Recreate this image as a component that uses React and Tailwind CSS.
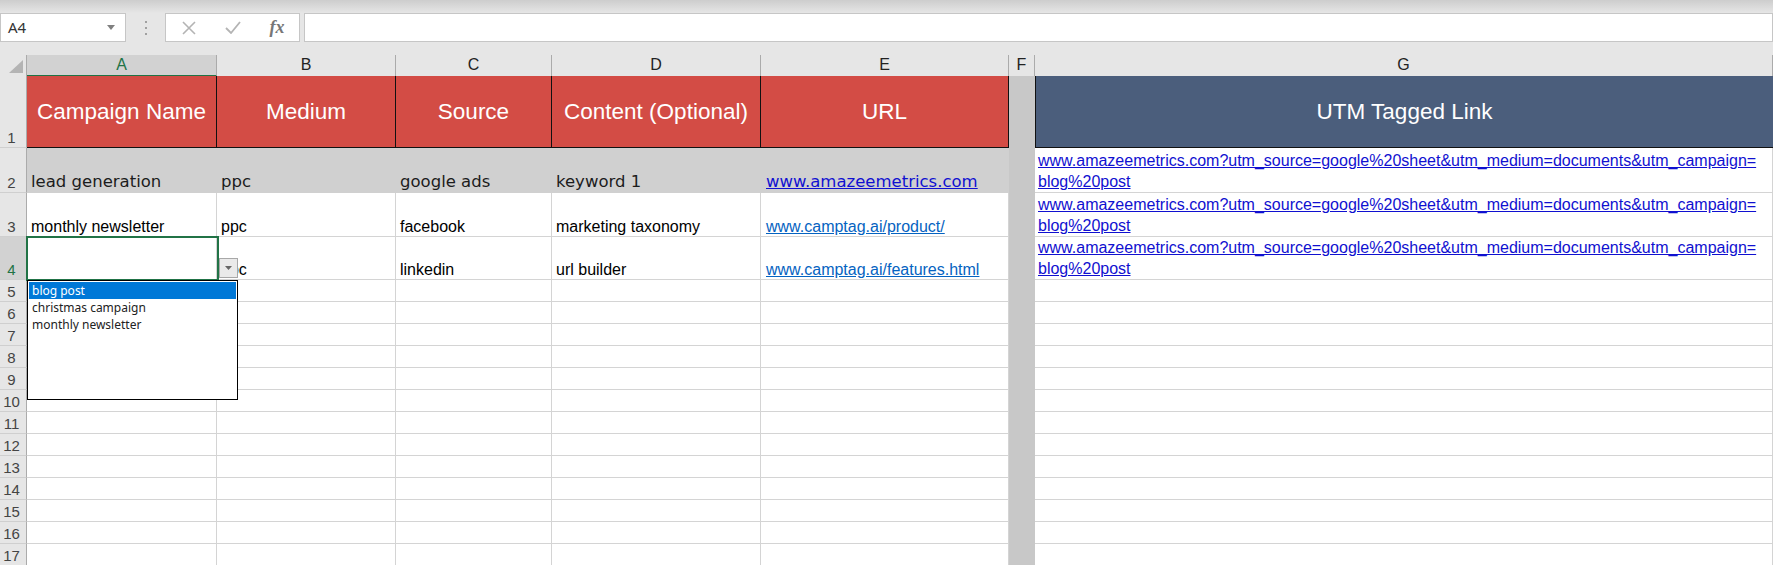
import React from 'react';

// Excel-like sheet: UTM builder with an open data validation dropdown on A4
const GRID = 'grid grid-cols-[27px_190px_179px_156px_209px_248px_26px_738px]';
const ARIAL = "font-['Liberation_Sans',Arial,sans-serif]";
const VERDANA = "font-['DejaVu_Sans',Verdana,sans-serif]";
const SEGOE = "font-['Noto_Sans','Open_Sans',sans-serif]";

const UTM_LINE = 'www.amazeemetrics.com?utm_source=google%20sheet&utm_medium=documents&utm_campaign=';

const HEADERS = ['Campaign Name', 'Medium', 'Source', 'Content (Optional)', 'URL'];

const DATA = [
  { n: 3, a: 'monthly newsletter', b: 'ppc', c: 'facebook', d: 'marketing taxonomy', e: 'www.camptag.ai/product/', h: 'h-[44px]' },
  { n: 4, a: '', b: 'ppc', c: 'linkedin', d: 'url builder', e: 'www.camptag.ai/features.html', h: 'h-[43px]', selected: true },
];

const EMPTY_ROWS = [5, 6, 7, 8, 9, 10, 11, 12, 13, 14, 15, 16, 17];

function RowHeader({ n, selected }) {
  return (
    <div
      className={`flex items-end justify-center pr-[3px] border-r border-b border-r-[#ababab] border-b-[#cfcfcf] text-[15px] leading-[19px] ${ARIAL} ${
        selected ? 'bg-[#d2d2d2] text-[#217346]' : 'bg-[#e6e6e6] text-[#444]'
      }`}
    >
      {n}
    </div>
  );
}

function UtmCell() {
  return (
    <div className={`flex flex-col justify-end pl-[3px] bg-white border-b border-r border-[#d4d4d4] text-[16px] leading-[21px] text-[#1010d0] underline whitespace-nowrap overflow-hidden ${ARIAL}`}>
      <span>{UTM_LINE}</span>
      <span>blog%20post</span>
    </div>
  );
}

function FormulaBar() {
  return (
    <div className="h-[29px] flex items-stretch bg-[#e6e6e6]">
      <div className="w-[126px] flex items-center justify-between bg-white border border-[#c6c6c6] pl-[7px] pr-[10px]">
        <span className={`text-[15px] text-[#333] ${SEGOE}`}>A4</span>
        <svg width="8" height="5" viewBox="0 0 8 5">
          <path d="M0 0h8L4 5z" fill="#808080" />
        </svg>
      </div>
      <div className="w-[39px] flex flex-col items-center justify-center gap-[4px]">
        <span className="w-[2px] h-[2px] bg-[#a0a0a0]" />
        <span className="w-[2px] h-[2px] bg-[#a0a0a0]" />
        <span className="w-[2px] h-[2px] bg-[#a0a0a0]" />
      </div>
      <div className="w-[135px] flex items-center bg-white border border-[#c6c6c6]">
        <div className="w-[45px] flex justify-center">
          <svg width="14" height="14" viewBox="0 0 14 14">
            <path d="M1 1l12 12M13 1L1 13" stroke="#b4b4b4" strokeWidth="1.6" />
          </svg>
        </div>
        <div className="w-[44px] flex justify-center">
          <svg width="16" height="13" viewBox="0 0 16 13">
            <path d="M1 7l5 5L15 1" stroke="#b4b4b4" strokeWidth="1.8" fill="none" />
          </svg>
        </div>
        <div className="w-[44px] flex justify-center italic font-bold text-[18px] text-[#777] font-['Liberation_Serif',serif]">
          fx
        </div>
      </div>
      <div className="w-[4px]" />
      <div className="flex-1 bg-white border border-[#c6c6c6]" />
    </div>
  );
}

function ColumnHeaders() {
  const letters = ['B', 'C', 'D', 'E', 'F', 'G'];
  return (
    <div className={`${GRID} h-[21px] bg-[#e6e6e6] text-[16px] leading-[20px] text-[#222] ${ARIAL}`}>
      <div className="flex items-end justify-end pr-[3px] pb-[3px] border-r border-b border-[#ababab]">
        <svg width="14" height="13" viewBox="0 0 14 13">
          <path d="M14 0V13H0z" fill="#b4b4b4" />
        </svg>
      </div>
      <div className="flex justify-center bg-[#d2d2d2] text-[#217346] border-b-2 border-[#217346] border-r border-r-[#ababab]">
        A
      </div>
      {letters.map((l) => (
        <div key={l} className="flex justify-center border-r border-b border-[#ababab]">
          {l}
        </div>
      ))}
    </div>
  );
}

export default function App() {
  return (
    <div className="w-[1773px] h-[565px] overflow-hidden bg-[#e6e6e6]">
      <div className="h-[13px] bg-gradient-to-b from-[#cdcdcd] to-[#e6e6e6]" />
      <FormulaBar />
      <div className="h-[13px]" />

      <div className="relative">
        <ColumnHeaders />

        {/* Row 1: headers */}
        <div className={`${GRID} h-[72px] text-white text-[22.5px] ${ARIAL}`}>
          <RowHeader n={1} />
          {HEADERS.map((h) => (
            <div key={h} className="flex items-center justify-center bg-[#d34c45] border-r border-b border-[#111]">
              {h}
            </div>
          ))}
          <div className="bg-[#c8c8c8]" />
          <div className="flex items-center justify-center bg-[#4b5e7c] border-l border-b border-[#111]">
            UTM Tagged Link
          </div>
        </div>

        {/* Row 2 */}
        <div className={`${GRID} h-[45px]`}>
          <RowHeader n={2} />
          {['lead generation', 'ppc', 'google ads', 'keyword 1'].map((t) => (
            <div key={t} className={`flex items-end pl-[4px] pb-[1px] bg-[#d0d0d0] text-[16.5px] leading-[20px] text-[#1c1c1c] whitespace-nowrap ${VERDANA}`}>
              {t}
            </div>
          ))}
          <div className={`flex items-end pl-[5px] pb-[1px] bg-[#d0d0d0] text-[16.5px] leading-[20px] text-[#1010d0] underline whitespace-nowrap ${VERDANA}`}>
            www.amazeemetrics.com
          </div>
          <div className="bg-[#c8c8c8]" />
          <UtmCell />
        </div>

        {/* Rows 3-4 */}
        {DATA.map((r) => (
          <div key={r.n} className={`${GRID} ${r.h} text-[16px] leading-[18px] text-black ${ARIAL}`}>
            <RowHeader n={r.n} selected={r.selected} />
            {[r.a, r.b, r.c, r.d].map((t, i) => (
              <div key={i} className="flex items-end pl-[4px] pb-[0px] bg-white border-r border-b border-[#d4d4d4] whitespace-nowrap overflow-hidden">
                {t}
              </div>
            ))}
            <div className="flex items-end pl-[5px] pb-[0px] bg-white border-r border-b border-[#d4d4d4] whitespace-nowrap text-[#0563c1] underline">
              {r.e}
            </div>
            <div className="bg-[#c8c8c8]" />
            <UtmCell />
          </div>
        ))}

        {/* Empty rows */}
        {EMPTY_ROWS.map((n) => (
          <div key={n} className={`${GRID} h-[22px]`}>
            <RowHeader n={n} />
            <div className="bg-white border-r border-b border-[#d4d4d4]" />
            <div className="bg-white border-r border-b border-[#d4d4d4]" />
            <div className="bg-white border-r border-b border-[#d4d4d4]" />
            <div className="bg-white border-r border-b border-[#d4d4d4]" />
            <div className="bg-white border-r border-b border-[#d4d4d4]" />
            <div className="bg-[#c8c8c8]" />
            <div className="bg-white border-r border-b border-[#d4d4d4]" />
          </div>
        ))}

        {/* Active cell A4 */}
        <div className="absolute left-[26px] top-[181px] w-[193px] h-[45px] border-2 border-[#217346]" />

        {/* Validation dropdown button */}
        <div className="absolute left-[219px] top-[203px] w-[19px] h-[20px] flex items-center justify-center bg-[#eaeaea] border border-[#a8a8a8]">
          <svg width="7" height="4" viewBox="0 0 7 4">
            <path d="M0 0h7L3.5 4z" fill="#666" />
          </svg>
        </div>

        {/* Validation list */}
        <div className={`absolute left-[27px] top-[225px] w-[211px] h-[120px] bg-white border border-black p-[1px] text-[12px] leading-[17px] text-[#222] ${SEGOE}`}>
          <div className="pl-[3px] bg-[#0078d7] text-white">blog post</div>
          <div className="pl-[3px]">christmas campaign</div>
          <div className="pl-[3px]">monthly newsletter</div>
        </div>
      </div>
    </div>
  );
}
